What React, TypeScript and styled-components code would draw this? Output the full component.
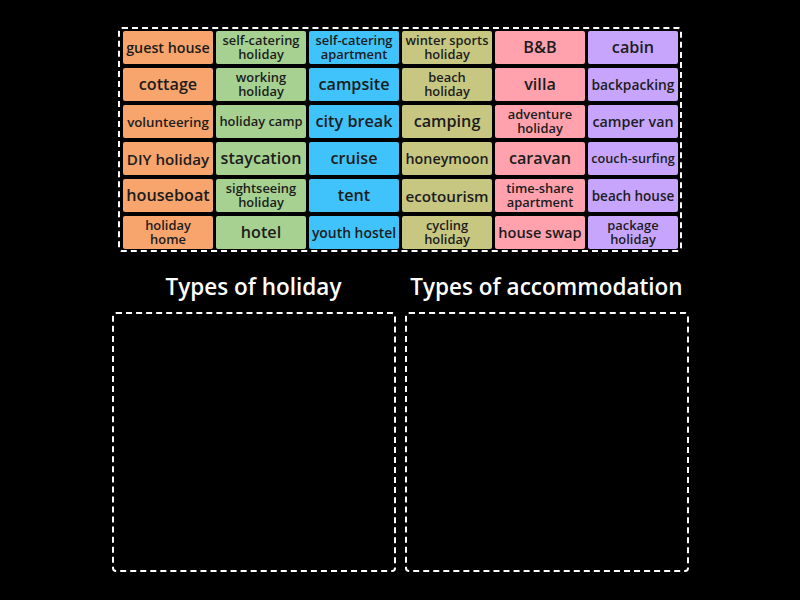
import styled, { createGlobalStyle } from 'styled-components';

const GlobalStyle = createGlobalStyle`
  html, body {
    margin: 0;
    padding: 0;
    background: #000;
  }
  body {
    font-family: "Open Sans", "Noto Sans", sans-serif;
  }
`

const colours: Record<string, string> = {
  orange: '#f8a56d',
  green: '#a6d191',
  blue: '#3fc3fa',
  olive: '#c7c781',
  pink: '#ffa2ae',
  purple: '#c7a5fd',
}

type Card = { text: string; colour: string; size: number }

// cards are listed row by row, six per row; \n marks a line break
const cards: Card[] = [
  { text: 'guest house', colour: 'orange', size: 14.3 },
  { text: 'self-catering\nholiday', colour: 'green', size: 12.9 },
  { text: 'self-catering\napartment', colour: 'blue', size: 12.9 },
  { text: 'winter sports\nholiday', colour: 'olive', size: 12.9 },
  { text: 'B&B', colour: 'pink', size: 16.2 },
  { text: 'cabin', colour: 'purple', size: 16.2 },

  { text: 'cottage', colour: 'orange', size: 16.2 },
  { text: 'working\nholiday', colour: 'green', size: 12.9 },
  { text: 'campsite', colour: 'blue', size: 16.2 },
  { text: 'beach\nholiday', colour: 'olive', size: 12.9 },
  { text: 'villa', colour: 'pink', size: 16.2 },
  { text: 'backpacking', colour: 'purple', size: 13.8 },

  { text: 'volunteering', colour: 'orange', size: 13.3 },
  { text: 'holiday camp', colour: 'green', size: 12.9 },
  { text: 'city break', colour: 'blue', size: 16.2 },
  { text: 'camping', colour: 'olive', size: 16.2 },
  { text: 'adventure\nholiday', colour: 'pink', size: 12.9 },
  { text: 'camper van', colour: 'purple', size: 14.3 },

  { text: 'DIY holiday', colour: 'orange', size: 15.2 },
  { text: 'staycation', colour: 'green', size: 16.2 },
  { text: 'cruise', colour: 'blue', size: 16.2 },
  { text: 'honeymoon', colour: 'olive', size: 14.3 },
  { text: 'caravan', colour: 'pink', size: 16.2 },
  { text: 'couch-surfing', colour: 'purple', size: 12.7 },

  { text: 'houseboat', colour: 'orange', size: 16.2 },
  { text: 'sightseeing\nholiday', colour: 'green', size: 12.9 },
  { text: 'tent', colour: 'blue', size: 16.2 },
  { text: 'ecotourism', colour: 'olive', size: 15.2 },
  { text: 'time-share\napartment', colour: 'pink', size: 12.9 },
  { text: 'beach house', colour: 'purple', size: 13.5 },

  { text: 'holiday\nhome', colour: 'orange', size: 12.9 },
  { text: 'hotel', colour: 'green', size: 16.2 },
  { text: 'youth hostel', colour: 'blue', size: 13.9 },
  { text: 'cycling\nholiday', colour: 'olive', size: 12.9 },
  { text: 'house swap', colour: 'pink', size: 14.6 },
  { text: 'package\nholiday', colour: 'purple', size: 12.9 },
]

const Page = styled.div`
  width: 800px;
  height: 600px;
  display: flex;
  flex-direction: column;
  align-items: center;
  padding-top: 27px;
  box-sizing: border-box;
`

const Tray = styled.div`
  width: 564px;
  box-sizing: border-box;
  border: 2px dashed #fff;
  border-radius: 4px;
  padding: 2px 2px 1px 3px;
  display: grid;
  grid-template-columns: repeat(6, 1fr);
  grid-auto-rows: 33px;
  column-gap: 3px;
  row-gap: 4px;
`

const Tile = styled.div<{ $bg: string; $size: number }>`
  background: ${p => p.$bg};
  border-radius: 2px;
  display: flex;
  align-items: center;
  justify-content: center;
  text-align: center;
  color: #1c1c1c;
  font-weight: 600;
  font-size: ${p => p.$size}px;
  line-height: 1.08;
  padding-top: 1px;
  box-sizing: border-box;
  overflow: hidden;
  white-space: pre;
`

const Groups = styled.div`
  display: grid;
  grid-template-columns: 284px 284px;
  column-gap: 9px;
  margin-top: 20px;
`

const Heading = styled.h2`
  margin: 0 0 10px;
  height: 30px;
  line-height: 30px;
  text-align: center;
  color: #fff;
  font-size: 22.5px;
  font-weight: 600;
  white-space: nowrap;
`

const DropZone = styled.div`
  height: 260px;
  box-sizing: border-box;
  border: 2px dashed #fff;
  border-radius: 4px;
`

function App() {
  return (
    <Page>
      <GlobalStyle />
      <Tray>
        {cards.map(c => (
          <Tile key={c.text} $bg={colours[c.colour]} $size={c.size}>
            {c.text}
          </Tile>
        ))}
      </Tray>
      <Groups>
        <div>
          <Heading>Types of holiday</Heading>
          <DropZone />
        </div>
        <div>
          <Heading>Types of accommodation</Heading>
          <DropZone />
        </div>
      </Groups>
    </Page>
  )
}

export default App
